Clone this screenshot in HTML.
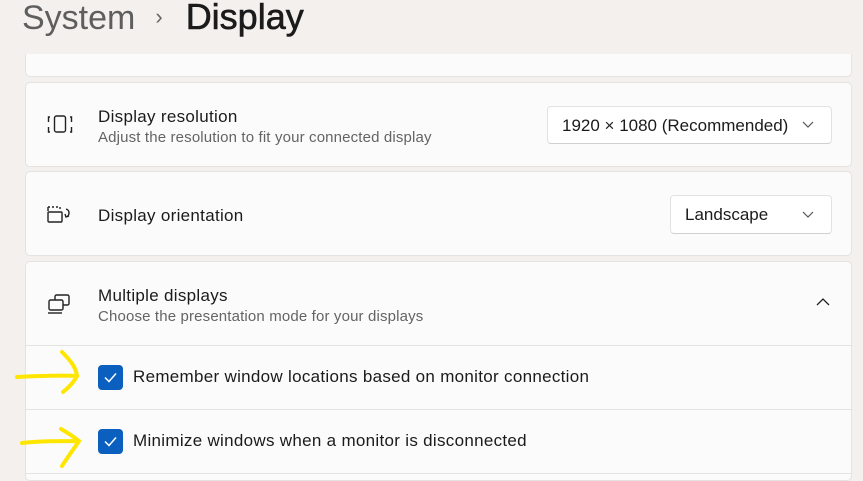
<!DOCTYPE html>
<html><head><meta charset="utf-8"><style>
body{margin:0;width:863px;height:475px;overflow:hidden;background:#f3f0ee;font-family:"Liberation Sans",sans-serif;position:relative;color:#1b1b1b}
.t{position:absolute;left:22px;top:-5px;font-size:34px;line-height:44px;white-space:nowrap}
.card{position:absolute;left:25px;width:827px;background:#fbfbfb;border:1px solid #e5e3e1;border-radius:5px;box-sizing:border-box}
.ab{position:absolute;white-space:nowrap}
.h{font-size:17px;letter-spacing:0.3px}.s{font-size:15px;color:#646464;letter-spacing:0.15px}
.dd{position:absolute;background:#fff;border:1px solid #e2e2e2;border-bottom-color:#d0d0d0;border-radius:4px;font-size:17px;box-sizing:border-box}
.div{position:absolute;left:25px;width:827px;height:1px;background:#e5e3e1}
.cb{position:absolute;left:98px;width:25px;height:25px;background:#0a5fbf;border-radius:4px}
</style></head><body>
<div class="card" style="top:40px;height:37px;border-top:none;border-radius:0 0 5px 5px"></div>
<div class="ab" style="left:565px;top:53px;width:232px;height:1px;background:#999"></div>
<div style="position:absolute;left:0;top:0;width:863px;height:54px;background:#f3f0ee"></div>
<div class="t"><span style="color:#5e5e5e">System</span><span style="color:#666;font-size:22px;position:relative;top:-5px;margin:0 23px 0 20px">›</span><span style="font-size:36px;-webkit-text-stroke:0.6px #1b1b1b">Display</span></div>

<div class="card" style="top:82px;height:85px"></div>
<svg class="ab" style="left:46px;top:113px" width="28" height="24" viewBox="0 0 28 24" fill="none" stroke="#222" stroke-width="1.4"><rect x="8.5" y="3" width="11" height="16" rx="2"/><path d="M4 4h-1.5v5M4 19h-1.5v-5M24 4h1.5v5M24 19h1.5v-5"/></svg>
<div class="ab h" style="left:98px;top:107px">Display resolution</div>
<div class="ab s" style="left:98px;top:129px">Adjust the resolution to fit your connected display</div>
<div class="dd" style="left:547px;top:106px;width:285px;height:38px"><span class="ab" style="left:14px;top:9px">1920 × 1080 (Recommended)</span><svg class="ab" style="left:254px;top:14px" width="12" height="8"><path d="M1 1l5 5 5-5" fill="none" stroke="#555" stroke-width="1.2"/></svg></div>

<div class="card" style="top:171px;height:85px"></div>
<svg class="ab" style="left:46px;top:203px" width="28" height="24" viewBox="0 0 28 24" fill="none" stroke="#222" stroke-width="1.4"><path d="M2 4h12v4" stroke-dasharray="2 2"/><path d="M2 4v4"/><rect x="2" y="9" width="14" height="10" rx="1"/><path d="M20 6c4 1 4 7 0 8M19 11l1 3 3-1"/></svg>
<div class="ab h" style="left:98px;top:206px">Display orientation</div>
<div class="dd" style="left:670px;top:195px;width:162px;height:39px"><span class="ab" style="left:14px;top:9px">Landscape</span><svg class="ab" style="left:131px;top:15px" width="12" height="8"><path d="M1 1l5 5 5-5" fill="none" stroke="#555" stroke-width="1.2"/></svg></div>

<div class="card" style="top:261px;height:220px"></div>
<svg class="ab" style="left:46px;top:292px" width="28" height="24" viewBox="0 0 28 24" fill="none" stroke="#222" stroke-width="1.4"><rect x="9" y="3" width="14" height="10" rx="1.5"/><rect x="3" y="8" width="14" height="10" rx="1.5" fill="#fbfbfb"/><path d="M2 21h14"/></svg>
<div class="ab h" style="left:98px;top:286px">Multiple displays</div>
<div class="ab s" style="left:98px;top:308px">Choose the presentation mode for your displays</div>
<svg class="ab" style="left:815px;top:296px" width="16" height="12" viewBox="0 0 16 12" fill="none" stroke="#222" stroke-width="1.3"><path d="M2 9l6-6 6 6"/></svg>
<div class="div" style="top:345px"></div>
<div class="div" style="top:409px"></div>
<div class="div" style="top:473px"></div>
<div class="cb" style="top:365px"></div>
<svg class="ab" style="left:98px;top:365px" width="25" height="25"><path d="M7 12.5l4 4 7-8" fill="none" stroke="#fff" stroke-width="1.5"/></svg>
<div class="ab h" style="left:133px;top:367px">Remember window locations based on monitor connection</div>
<div class="cb" style="top:429px"></div>
<svg class="ab" style="left:98px;top:429px" width="25" height="25"><path d="M7 12.5l4 4 7-8" fill="none" stroke="#fff" stroke-width="1.5"/></svg>
<div class="ab h" style="left:133px;top:431px">Minimize windows when a monitor is disconnected</div>
<svg class="ab" style="left:0;top:340px" width="90" height="135" fill="none" stroke="#ffe600" stroke-width="4" stroke-linecap="round"><path d="M17 37c20-1 40-2 60-1M62 12c8 8 14 15 15 24-3 6-9 12-14 16M22 103c18-2 36-2 57-2M61 89c7 4 13 8 18 12-6 9-12 17-17 25"/></svg>
</body></html>
